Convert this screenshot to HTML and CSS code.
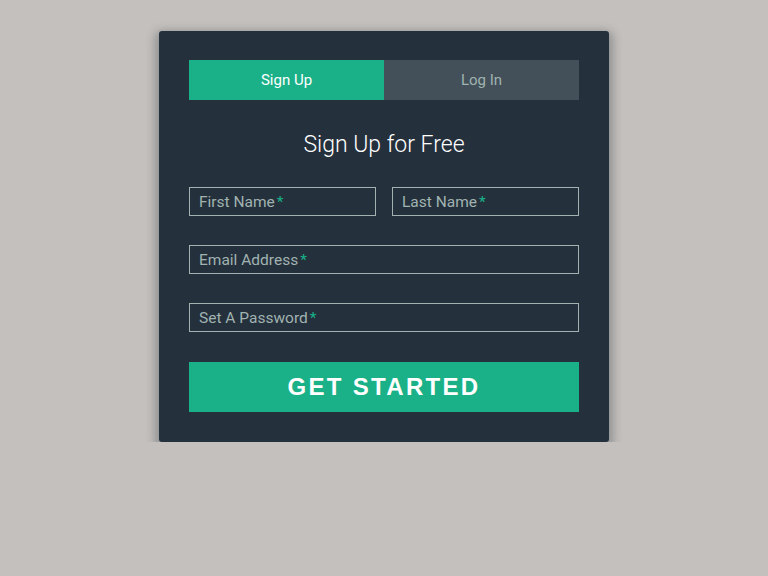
FILE: index.html
```html
<!DOCTYPE html>
<html>
<head>
  <title>Sign Up</title>
  <link rel="stylesheet" href="styles.css">
</head>
<body>
  <div class="form">
    <ul class="tab-group">
      <li class="tab active"><a href="#signup">Sign Up</a></li>
      <li class="tab"><a href="#login">Log In</a></li>
    </ul>
    <h1>Sign Up for Free</h1>
    <form action="/" method="post">
      <div class="top-row">
        <div class="field-wrap">
          <label>First Name<span class="req">*</span></label>
          <input type="text" required>
        </div>
        <div class="field-wrap">
          <label>Last Name<span class="req">*</span></label>
          <input type="text" required>
        </div>
      </div>
      <div class="field-wrap">
        <label>Email Address<span class="req">*</span></label>
        <input type="email" required>
      </div>
      <div class="field-wrap last">
        <label>Set A Password<span class="req">*</span></label>
        <input type="password" required>
      </div>
      <button type="submit" class="button">Get Started</button>
    </form>
  </div>
</body>
</html>
```

FILE: styles.css
```css
* {
  box-sizing: border-box;
}

body {
  margin: 0;
  padding-top: 31px;
  background: #c4c0bd;
  font-family: 'Roboto', sans-serif;
}

a {
  text-decoration: none;
}

.form {
  width: 450px;
  margin: 0 auto;
  padding: 29px 30px 30px;
  background: #24303c;
  border-radius: 3px;
  box-shadow: 0 4px 10px 4px rgba(19, 35, 47, 0.3);
}

.tab-group {
  list-style: none;
  margin: 0;
  padding: 0;
  display: flex;
}

.tab {
  flex: 1;
}

.tab a {
  display: block;
  height: 40px;
  line-height: 40px;
  text-align: center;
  font-size: 15px;
  background: #435059;
  color: #a0b3b0;
}

.tab.active a {
  background: #1ab188;
  color: #fff;
}

h1 {
  margin: 30px 0 27px;
  text-align: center;
  color: #fff;
  font-weight: 300;
  font-size: 23px;
  line-height: 30px;
}

.top-row {
  display: flex;
  gap: 16px;
}

.top-row .field-wrap {
  flex: 1;
}

.field-wrap {
  position: relative;
  margin-bottom: 29px;
}

.field-wrap.last {
  margin-bottom: 30px;
}

label {
  position: absolute;
  left: 10px;
  top: 50%;
  transform: translateY(-50%);
  color: #a0b3b0;
  font-size: 15.5px;
  pointer-events: none;
}

.req {
  margin-left: 2px;
  color: #1ab188;
}

input {
  display: block;
  width: 100%;
  height: 29px;
  padding: 0 10px;
  background: none;
  border: 1px solid #a0b3b0;
  border-radius: 0;
  color: #fff;
  font-size: 16px;
}

input:focus {
  outline: 0;
  border-color: #1ab188;
}

.button {
  display: block;
  width: 100%;
  height: 50px;
  border: 0;
  background: #1ab188;
  color: #fff;
  font-family: 'Liberation Sans', Arial, sans-serif;
  font-size: 24px;
  font-weight: 700;
  letter-spacing: 2.3px;
  text-transform: uppercase;
  cursor: pointer;
}

.button:hover {
  background: #179b77;
}
```
